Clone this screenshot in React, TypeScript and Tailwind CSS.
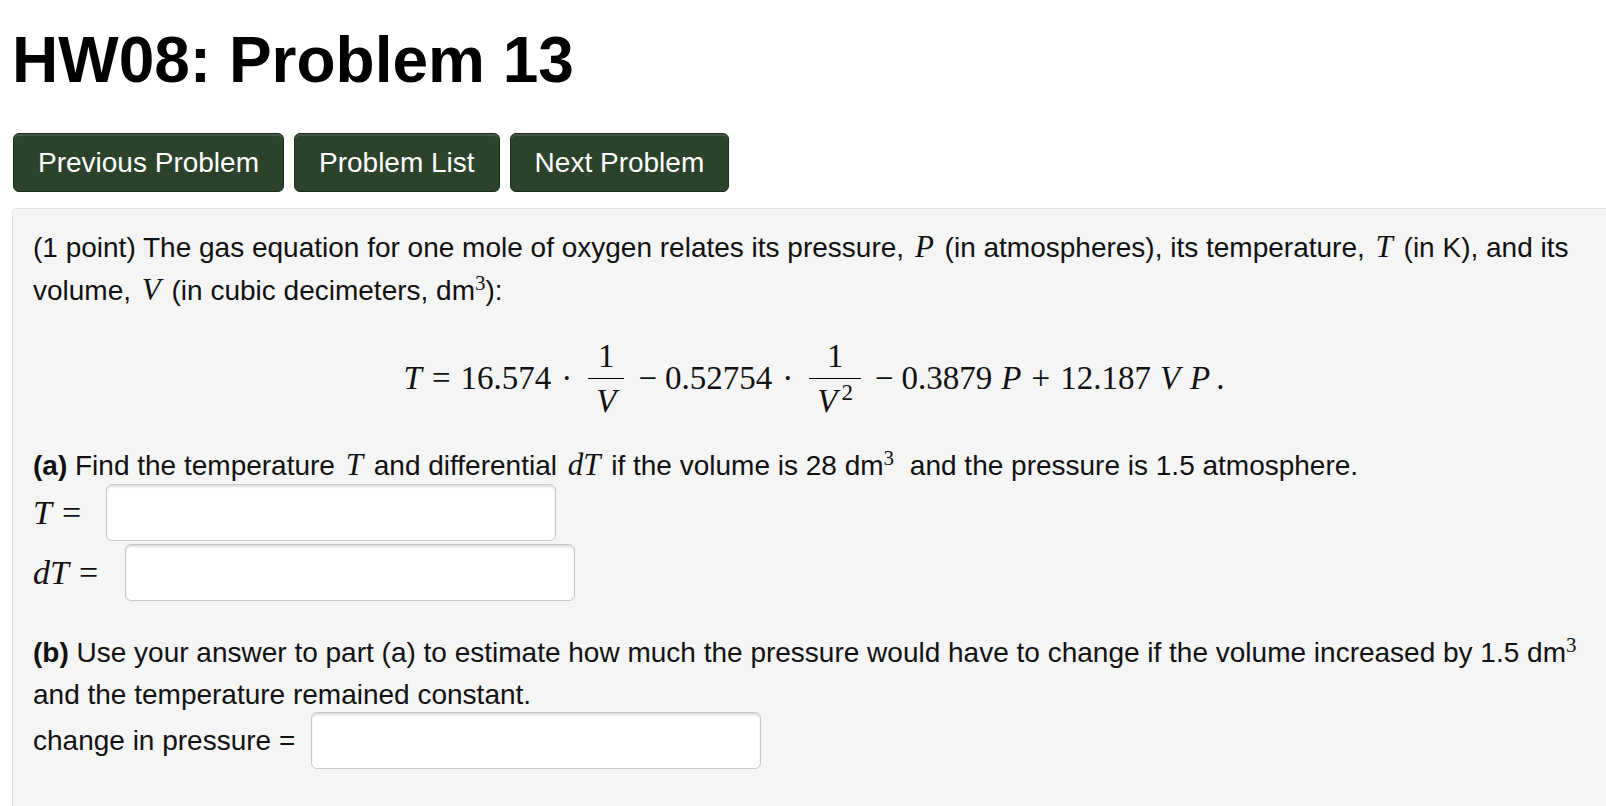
import React from 'react'

const sans = { fontFamily: '"Liberation Sans", Arial, sans-serif' }

function M({ children }: { children: React.ReactNode }) {
  return <span className="mx-[3px] font-['Liberation_Serif',serif] italic text-[31px]">{children}</span>
}

function Cube({ className = '' }: { className?: string }) {
  return <sup className={`font-['Liberation_Serif',serif] text-[21px] ${className}`}>3</sup>
}

function Frac({ num, den }: { num: React.ReactNode; den: React.ReactNode }) {
  return (
    <span className="mx-[6px] inline-flex flex-col items-center">
      <span className="px-[8px] leading-[44px]">{num}</span>
      <span className="w-full border-t-[1.5px] border-black" />
      <span className="px-[8px] leading-[44px]">{den}</span>
    </span>
  )
}

function AnswerBox({ className = '' }: { className?: string }) {
  return (
    <input
      type="text"
      className={`h-[57px] w-[450px] rounded-[6px] border border-[#c8c8c8] bg-white shadow-[inset_0_2px_2px_rgba(0,0,0,0.13)] outline-none ${className}`}
    />
  )
}

function NavButton({ label }: { label: string }) {
  return (
    <button className="h-[59px] rounded-[6px] border border-[#1c2c1c] bg-[#2b422b] px-[24px] text-[28px] text-white shadow-[inset_0_2px_0_rgba(255,255,255,0.12)]">
      {label}
    </button>
  )
}

export default function App() {
  return (
    <div className="min-h-[806px] w-full overflow-x-hidden bg-white text-[#111]" style={sans}>
      <h1 className="pl-[12px] pt-[25px] text-[64px] font-bold leading-[70px] text-black">HW08: Problem 13</h1>

      <div className="mt-[38px] flex gap-[10px] pl-[13px]">
        <NavButton label="Previous Problem" />
        <NavButton label="Problem List" />
        <NavButton label="Next Problem" />
      </div>

      <div className="ml-[12px] mt-[16px] min-h-[600px] w-[1620px] rounded-tl-[4px] border border-[#e3e3e3] bg-[#f5f5f5] pb-[40px] pl-[20px] pr-[20px] pt-[17px] text-[28px] leading-[42px]">
        <p>
          (1 point) The gas equation for one mole of oxygen relates its pressure, <M>P</M> (in atmospheres), its
          temperature, <M>T</M> (in K), and its volume, <M>V</M> (in cubic decimeters, dm
          <Cube />
          ):
        </p>

        <div className="flex h-[132px] items-center justify-center pr-[16px] font-['Liberation_Serif',serif] text-[33px]">
          <span className="italic">T</span>
          <span className="mx-[10px]">=</span>
          <span>16.574</span>
          <span className="mx-[10px]">·</span>
          <Frac num="1" den={<span className="italic">V</span>} />
          <span className="mx-[8px]">−</span>
          <span>0.52754</span>
          <span className="mx-[10px]">·</span>
          <Frac
            num="1"
            den={
              <span>
                <span className="italic">V</span>
                <sup className="ml-[4px] text-[23px]">2</sup>
              </span>
            }
          />
          <span className="mx-[8px]">−</span>
          <span>0.3879</span>
          <span className="ml-[9px] italic">P</span>
          <span className="mx-[10px]">+</span>
          <span>12.187</span>
          <span className="ml-[9px] italic">V</span>
          <span className="ml-[10px] italic">P</span>
          <span className="ml-[6px]">.</span>
        </div>

        <p>
          <b>(a)</b> Find the temperature <M>T</M> and differential <M>dT</M> if the volume is 28 dm
          <Cube className="mr-[8px]" /> and the pressure is 1.5 atmosphere.
        </p>
        <div className="-mt-[3px] flex items-center">
          <span className="font-['Liberation_Serif',serif] text-[34px]">
            <span className="italic">T</span>
            <span className="ml-[10px]">=</span>
          </span>
          <AnswerBox className="ml-[25px]" />
        </div>
        <div className="mt-[3px] flex items-center">
          <span className="font-['Liberation_Serif',serif] text-[34px]">
            <span className="italic">dT</span>
            <span className="ml-[10px]">=</span>
          </span>
          <AnswerBox className="ml-[27px]" />
        </div>

        <p className="mt-[31px]">
          <b>(b)</b> Use your answer to part (a) to estimate how much the pressure would have to change if the volume
          increased by 1.5 dm<Cube /> and the temperature remained constant.
        </p>
        <div className="-mt-[4px] flex items-center">
          <span>change in pressure =</span>
          <AnswerBox className="ml-[16px]" />
        </div>
      </div>
    </div>
  )
}
